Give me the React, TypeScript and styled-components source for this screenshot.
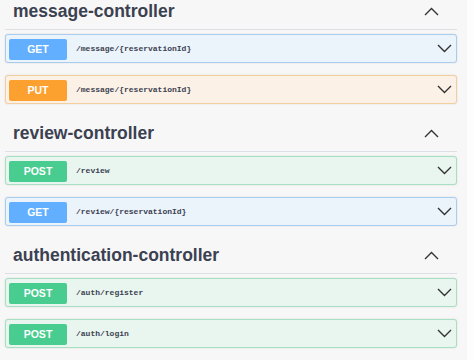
import React from "react";
import styled, { createGlobalStyle } from "styled-components";

const GlobalStyle = createGlobalStyle`
    html, body {
        margin: 0;
        padding: 0;
        background: #fdfdfd;
        overflow: hidden;
    }
`;

type Method = "GET" | "PUT" | "POST";

const METHOD_COLORS: Record<Method, { main: string; bg: string; border: string }> = {
    GET: { main: "#61affe", bg: "#ebf3fb", border: "#a9cdef" },
    PUT: { main: "#fca130", bg: "#fbf1e6", border: "#f3cf9f" },
    POST: { main: "#49cc90", bg: "#e8f6ef", border: "#a6dfc1" },
};

/**
 * Page styles:
 */
const Page = styled.div`
    width: 467px;
    height: 360px;
    background: #f7f7f7;
    overflow: hidden;
`,
    Scroller = styled.div`
    margin-top: -6px;
    padding: 0 10px 0 5px;
`;

/**
 * Tag section styles:
 */
const TagSection = styled.section`
    display: flex;
    flex-direction: column;
`,
    TagHeader = styled.div`
    display: flex;
    align-items: center;
    height: 35px;
    padding: 0 8px;
    border-bottom: 1px solid #dcdfe3;
    margin-bottom: 4px;
`,
    TagTitle = styled.h3`
    flex: 1;
    margin: 0;
    font-family: "Liberation Sans", Arial, sans-serif;
    font-weight: bold;
    font-size: 17.5px;
    color: #3b4151;
`,
    Chevron = styled.svg<{ $gap?: number }>`
    flex: none;
    width: 15px;
    height: 9px;
    margin-right: ${(p) => p.$gap ?? 0}px;
    fill: none;
    stroke: #333;
    stroke-width: 1.4;
`;

/**
 * Operation row styles:
 */
const OpRow = styled.div<{ $method: Method }>`
    display: flex;
    align-items: center;
    height: 27px;
    margin-bottom: 12px;
    padding: 0 4px 0 3px;
    border: 1px solid ${(p) => METHOD_COLORS[p.$method].border};
    border-radius: 3px;
    background: ${(p) => METHOD_COLORS[p.$method].bg};
    box-shadow: 0 0 2px rgba(0, 0, 0, 0.12);
`,
    MethodBadge = styled.span<{ $method: Method }>`
    flex: none;
    width: 58px;
    height: 21px;
    line-height: 21px;
    margin-top: 1px;
    border-radius: 2px;
    background: ${(p) => METHOD_COLORS[p.$method].main};
    color: #fff;
    text-align: center;
    font-family: "Liberation Sans", Arial, sans-serif;
    font-weight: bold;
    font-size: 10.5px;
`,
    OpPath = styled.span`
    flex: 1;
    margin-left: 9px;
    font-family: "Liberation Mono", "Courier New", monospace;
    font-weight: bold;
    font-size: 8px;
    color: #3b4151;
`;

const ChevronUp = () => (
    <Chevron viewBox="0 0 15 9" $gap={10}>
        <polyline points="1,8 7.5,1.5 14,8" />
    </Chevron>
);

const ChevronDown = () => (
    <Chevron viewBox="0 0 15 9">
        <polyline points="1,1 7.5,7.5 14,1" />
    </Chevron>
);

type Op = { method: Method; path: string };

const TAGS: { name: string; ops: Op[] }[] = [
    {
        name: "message-controller",
        ops: [
            { method: "GET", path: "/message/{reservationId}" },
            { method: "PUT", path: "/message/{reservationId}" },
        ],
    },
    {
        name: "review-controller",
        ops: [
            { method: "POST", path: "/review" },
            { method: "GET", path: "/review/{reservationId}" },
        ],
    },
    {
        name: "authentication-controller",
        ops: [
            { method: "POST", path: "/auth/register" },
            { method: "POST", path: "/auth/login" },
        ],
    },
];

export default function App() {
    return (
        <>
            <GlobalStyle />
            <Page>
                <Scroller>
                    {TAGS.map((tag) => (
                        <TagSection key={tag.name}>
                            <TagHeader>
                                <TagTitle>{tag.name}</TagTitle>
                                <ChevronUp />
                            </TagHeader>
                            {tag.ops.map((op) => (
                                <OpRow key={op.method + op.path} $method={op.method}>
                                    <MethodBadge $method={op.method}>{op.method}</MethodBadge>
                                    <OpPath>{op.path}</OpPath>
                                    <ChevronDown />
                                </OpRow>
                            ))}
                        </TagSection>
                    ))}
                </Scroller>
            </Page>
        </>
    );
}
